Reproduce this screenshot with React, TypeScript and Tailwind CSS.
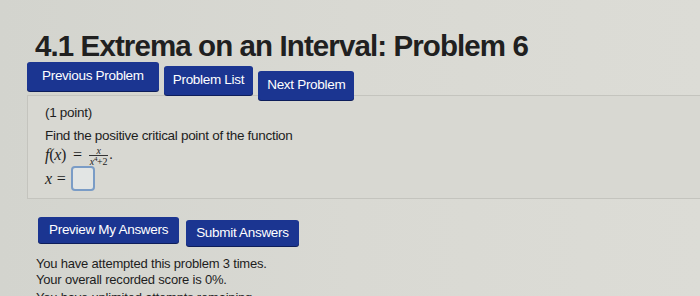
import React from "react";

const btn =
  "bg-[#1b3591] text-white rounded-[3px] flex items-center tracking-[-0.3px] shadow-[0_1px_0_#0d1d5a]";

export default function App() {
  return (
    <div
      className="w-[700px] h-[296px] overflow-hidden bg-gradient-to-r from-[#d3d4ce] via-[#d9d9d3] to-[#dcdcd6] text-[#1d1d1d]"
      style={{ fontFamily: '"Liberation Sans", Arial, sans-serif' }}
    >
      <div className="pl-[35px] pt-[29px]">
        <h1 className="text-[29.5px] leading-[34px] font-bold tracking-[-0.9px] text-[#202020]">
          4.1 Extrema on an Interval: Problem 6
        </h1>
      </div>
      <div className="flex gap-[5px] pl-[27px] mt-[-1px]">
        <div className={btn + " h-[29px] px-[15px] text-[13.5px]"}>Previous Problem</div>
        <div className={btn + " h-[29px] px-[9px] text-[13.5px] mt-[4px]"}>Problem List</div>
        <div className={btn + " h-[29px] px-[9px] text-[13.5px] mt-[9px]"}>Next Problem</div>
      </div>
      <div className="ml-[27px] mt-[-5px] border-t border-b border-l border-[#c4c4be] bg-[#d8d8d2] pl-[17px] pt-[8px] h-[104px] text-[13.5px] leading-[17px] tracking-[-0.3px]">
        <div>(1 point)</div>
        <div className="mt-[6px]">Find the positive critical point of the function</div>
        <div className="flex items-center h-[20px]" style={{ fontFamily: '"Liberation Serif", "Times New Roman", serif' }}>
          <span className="italic text-[16px]">f</span>
          <span className="text-[16px]">(</span>
          <span className="italic text-[16px]">x</span>
          <span className="text-[16px]">)</span>
          <span className="mx-[7px] text-[16px]">=</span>
          <span className="inline-flex flex-col items-center text-[10px] leading-[9px] mt-[3px]">
            <span className="italic">x</span>
            <span className="border-t border-[#333] px-[1px] pt-[1px]">
              <span className="italic">x</span>
              <sup className="text-[7px]">4</sup>+2
            </span>
          </span>
          <span className="text-[14px] ml-[1px]">.</span>
        </div>
        <div className="flex items-center mt-[2px]" style={{ fontFamily: '"Liberation Serif", "Times New Roman", serif' }}>
          <span className="italic text-[16px]">x</span>
          <span className="mx-[5px] text-[16px]">=</span>
          <span className="inline-block w-[24px] h-[25px] rounded-[4px] border-[2px] border-[#7a9cc6] bg-[#e2e5e4]"></span>
        </div>
      </div>
      <div className="flex gap-[7px] pl-[38px] mt-[18px]">
        <div className={btn + " h-[26px] px-[11px] text-[13.5px]"}>Preview My Answers</div>
        <div className={btn + " h-[26px] px-[10px] text-[13.5px] mt-[3px]"}>Submit Answers</div>
      </div>
      <div className="pl-[36px] mt-[10px] text-[13px] leading-[16px] tracking-[-0.2px]">
        <div>You have attempted this problem 3 times.</div>
        <div>Your overall recorded score is 0%.</div>
        <div className="mt-[2px]">You have unlimited attempts remaining.</div>
      </div>
    </div>
  );
}
